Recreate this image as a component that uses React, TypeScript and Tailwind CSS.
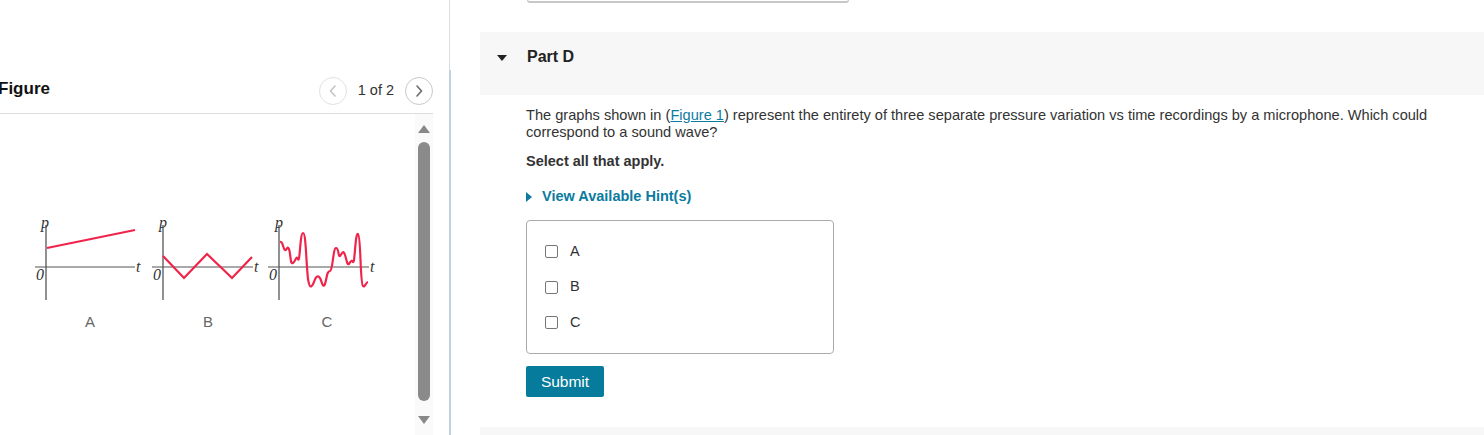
import React from 'react';

function Chevron({ dir, faded }: { dir: 'left' | 'right'; faded?: boolean }) {
  return (
    <span
      className={`flex h-[28px] w-[28px] items-center justify-center rounded-full border ${
        faded ? 'border-[#e2e2e2]' : 'border-[#c9c9c9]'
      }`}
    >
      <svg width="10" height="14" viewBox="0 0 10 14" fill="none">
        <path
          d={dir === 'left' ? 'M7 2 L2.5 7 L7 12' : 'M3 2 L7.5 7 L3 12'}
          stroke={faded ? '#c4c4c4' : '#6b6b6b'}
          strokeWidth="1.6"
          strokeLinecap="round"
          strokeLinejoin="round"
        />
      </svg>
    </span>
  );
}

function Graphs() {
  const axis = '#555';
  const red = '#f0244a';
  const lab = { fontFamily: '"Liberation Serif", serif', fontStyle: 'italic' as const, fontSize: 16, fill: '#333' };
  const cap = { fontFamily: '"Liberation Sans", sans-serif', fontSize: 15, fill: '#666' };
  return (
    <svg width="400" height="140" viewBox="0 200 400 140">
      {/* A */}
      <line x1="46" y1="226" x2="46" y2="301" stroke={axis} strokeWidth="1.3" />
      <line x1="35" y1="268" x2="135" y2="268" stroke={axis} strokeWidth="1.1" />
      <text x="41" y="229" {...lab}>p</text>
      <text x="136" y="273" {...lab}>t</text>
      <text x="36" y="281" {...lab}>0</text>
      <line x1="47" y1="249" x2="135" y2="231" stroke={red} strokeWidth="2.2" />
      {/* B */}
      <line x1="163" y1="226" x2="163" y2="301" stroke={axis} strokeWidth="1.3" />
      <line x1="152" y1="268" x2="253" y2="268" stroke={axis} strokeWidth="1.1" />
      <text x="159" y="229" {...lab}>p</text>
      <text x="254" y="273" {...lab}>t</text>
      <text x="153" y="281" {...lab}>0</text>
      <polyline
        points="163,257 184,279 207,255 232,279 252,258"
        fill="none"
        stroke={red}
        strokeWidth="2.2"
        strokeLinejoin="miter"
      />
      {/* C */}
      <line x1="279" y1="226" x2="279" y2="301" stroke={axis} strokeWidth="1.3" />
      <line x1="268" y1="268" x2="369" y2="268" stroke={axis} strokeWidth="1.1" />
      <text x="275" y="229" {...lab}>p</text>
      <text x="370" y="273" {...lab}>t</text>
      <text x="269" y="281" {...lab}>0</text>
      <path
        d="M280 243 C283 242 283 250 285 251 C287 252 287 246 289 250 C291 256 290 266 293 264 C296 262 296 256 298 260 C300 265 300 234 303 234 C306 234 306 262 308 280 C310 292 312 287 314 283 C316 277 318 276 320 279 C322 283 323 290 325 285 C327 278 327 272 330 272 C333 271 333 249 336 249 C339 249 338 258 340 257 C342 255 343 250 345 256 C347 262 347 266 349 265 C351 262 351 261 353 263 C355 265 355 234 358 235 C361 236 360 285 363 287 C365 289 366 283 368 283"
        fill="none"
        stroke={red}
        strokeWidth="2.2"
      />
      <text x="90" y="328" textAnchor="middle" {...cap}>A</text>
      <text x="208" y="328" textAnchor="middle" {...cap}>B</text>
      <text x="327" y="328" textAnchor="middle" {...cap}>C</text>
    </svg>
  );
}

function Option({ label }: { label: string }) {
  return (
    <label className="flex h-[35.5px] items-center gap-[12px]">
      <span className="h-[13px] w-[13px] rounded-[2px] border border-[#767676] bg-white" />
      <span className="text-[14.5px] text-[#333]">{label}</span>
    </label>
  );
}

export default function App() {
  return (
    <div
      className="flex h-[435px] w-[1484px] overflow-hidden bg-white text-[#333]"
      style={{ fontFamily: '"Liberation Sans", Arial, sans-serif' }}
    >
      {/* Figure pane */}
      <div className="flex w-[449px] shrink-0 flex-col pr-[16px]">
        <div className="mt-[64px] flex h-[50px] items-center justify-between border-b border-[#dedede]">
          <h2 className="-ml-[2px] text-[17px] font-bold text-[#111]">Figure</h2>
          <div className="flex items-center gap-[11px] pt-[4px]">
            <Chevron dir="left" faded />
            <span className="text-[14.5px] text-[#333]">1 of 2</span>
            <Chevron dir="right" />
          </div>
        </div>
        <div className="flex flex-1">
          <div className="flex-1 pt-[85px]">
            <Graphs />
          </div>
          <div className="flex w-[18px] flex-col items-center bg-[#fafafa] pt-[11px]">
            <span className="h-0 w-0 border-x-[6px] border-b-[8px] border-x-transparent border-b-[#888]" />
            <span className="mt-[9px] h-[259px] w-[12px] rounded-full bg-[#8a8a8a]" />
            <span className="mt-[15px] h-0 w-0 border-x-[6px] border-t-[8px] border-x-transparent border-t-[#888]" />
          </div>
        </div>
      </div>

      {/* Divider */}
      <div className="flex w-[2px] shrink-0 flex-col">
        <div className="h-[70px] w-[1px] bg-[#d6dde5]" />
        <div className="w-[2px] flex-1 bg-[#c3d2e2]" />
      </div>

      {/* Question pane */}
      <div className="flex flex-1 flex-col pl-[29px]">
        <div className="ml-[47px] h-[3px] w-[322px] rounded-b-md border-x border-b-2 border-[#c8c8c8]" />
        <div className="mt-[29px] flex h-[63px] items-start gap-[20px] bg-[#f7f7f7] pl-[17px] pt-[16px]">
          <span className="mt-[7px] h-0 w-0 border-x-[5px] border-t-[6px] border-x-transparent border-t-[#222]" />
          <span className="text-[16px] font-bold leading-[18px] text-[#222]">Part D</span>
        </div>
        <div className="flex flex-1 flex-col pl-[46px] pr-[20px]">
          <p className="mt-[12px] text-[14.6px] leading-[17px] text-[#333]">
            The graphs shown in (<a className="text-[#0b7ca0] underline">Figure 1</a>) represent the entirety of three separate pressure variation vs time recordings by a microphone. Which could correspond to a sound wave?
          </p>
          <p className="mt-[12px] text-[14.5px] font-bold leading-[17px] text-[#333]">Select all that apply.</p>
          <div className="mt-[18px] flex items-center gap-[10px] text-[14.5px] font-bold leading-[17px] text-[#0b7b9e]">
            <span className="h-0 w-0 border-y-[5px] border-l-[6px] border-y-transparent border-l-[#0b7b9e]" />
            View Available Hint(s)
          </div>
          <div className="mt-[15px] flex h-[134px] w-[308px] flex-col justify-center rounded-[4px] border border-[#ababab] pl-[18px]">
            <Option label="A" />
            <Option label="B" />
            <Option label="C" />
          </div>
          <button className="mt-[12px] h-[31px] w-[78px] rounded-[2px] bg-[#067b9c] text-[15.5px] text-white">
            Submit
          </button>
        </div>
        <div className="h-[8px] bg-[#f7f7f7]" />
      </div>
    </div>
  );
}
